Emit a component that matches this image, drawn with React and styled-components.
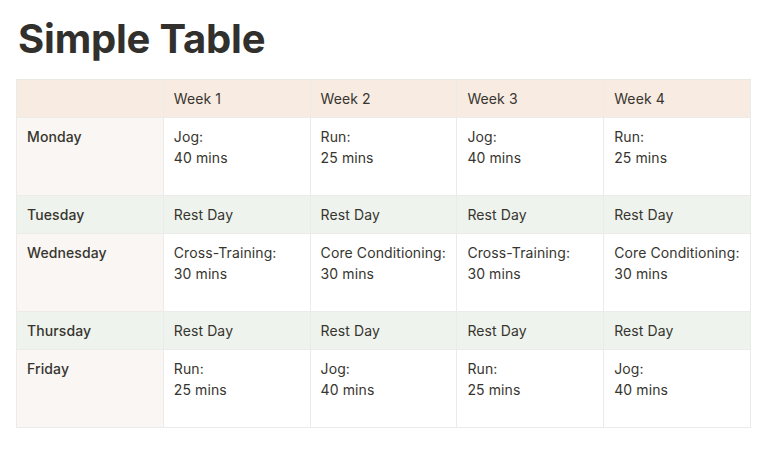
import styled, { createGlobalStyle } from 'styled-components';

const GlobalStyle = createGlobalStyle`
	html, body {
		margin: 0;
		padding: 0;
		background: #ffffff;
	}
	body {
		font-family: Inter, "Noto Sans", "Liberation Sans", sans-serif;
		color: #37352f;
	}
`;

const Page = styled.div`
	padding: 15px 18px 0 16px;
`;

const Title = styled.h1`
	margin: 0 0 16px 2px;
	font-size: 40px;
	line-height: 48px;
	font-weight: 700;
	letter-spacing: -0.2px;
	color: #32302c;
`;

const Table = styled.div`
	display: grid;
	grid-template-columns: repeat(5, 1fr);
	width: 734px;
	border-top: 1px solid #ebe7e2;
	border-left: 1px solid #ebebea;
`;

const Cell = styled.div`
	box-sizing: border-box;
	min-height: ${({ $tall }) => ($tall ? '78px' : '37px')};
	padding: 8px 10px;
	font-size: 14px;
	line-height: 21px;
	letter-spacing: 0.1px;
	font-weight: ${({ $bold }) => ($bold ? 500 : 400)};
	color: #37352f;
	background: ${({ $bg }) => $bg};
	border-right: 1px solid #ebebea;
	border-bottom: 1px solid #ebebea;
	white-space: pre-line;
`;

const weeks = ['Week 1', 'Week 2', 'Week 3', 'Week 4'];

const rows = [
	{ day: 'Monday', tall: true, cells: ['Jog:\n40 mins', 'Run:\n25 mins', 'Jog:\n40 mins', 'Run:\n25 mins'] },
	{ day: 'Tuesday', rest: true, cells: ['Rest Day', 'Rest Day', 'Rest Day', 'Rest Day'] },
	{ day: 'Wednesday', tall: true, cells: ['Cross-Training:\n30 mins', 'Core Conditioning:\n30 mins', 'Cross-Training:\n30 mins', 'Core Conditioning:\n30 mins'] },
	{ day: 'Thursday', rest: true, cells: ['Rest Day', 'Rest Day', 'Rest Day', 'Rest Day'] },
	{ day: 'Friday', tall: true, cells: ['Run:\n25 mins', 'Jog:\n40 mins', 'Run:\n25 mins', 'Jog:\n40 mins'] },
];

const HEADER_BG = '#f8ebe2';
const SIDE_BG = '#f9f6f3';
const REST_BG = '#eef3ed';

export default function App() {
	return (
		<Page>
			<GlobalStyle />
			<Title>Simple Table</Title>
			<Table>
				<Cell $bg={HEADER_BG} />
				{weeks.map((w) => (
					<Cell key={w} $bg={HEADER_BG}>{w}</Cell>
				))}
				{rows.map((r) => [
					<Cell key={r.day} $bold $tall={r.tall} $bg={r.rest ? REST_BG : SIDE_BG}>{r.day}</Cell>,
					...r.cells.map((c, i) => (
						<Cell key={r.day + i} $tall={r.tall} $bg={r.rest ? REST_BG : '#ffffff'}>{c}</Cell>
					)),
				])}
			</Table>
		</Page>
	);
}
